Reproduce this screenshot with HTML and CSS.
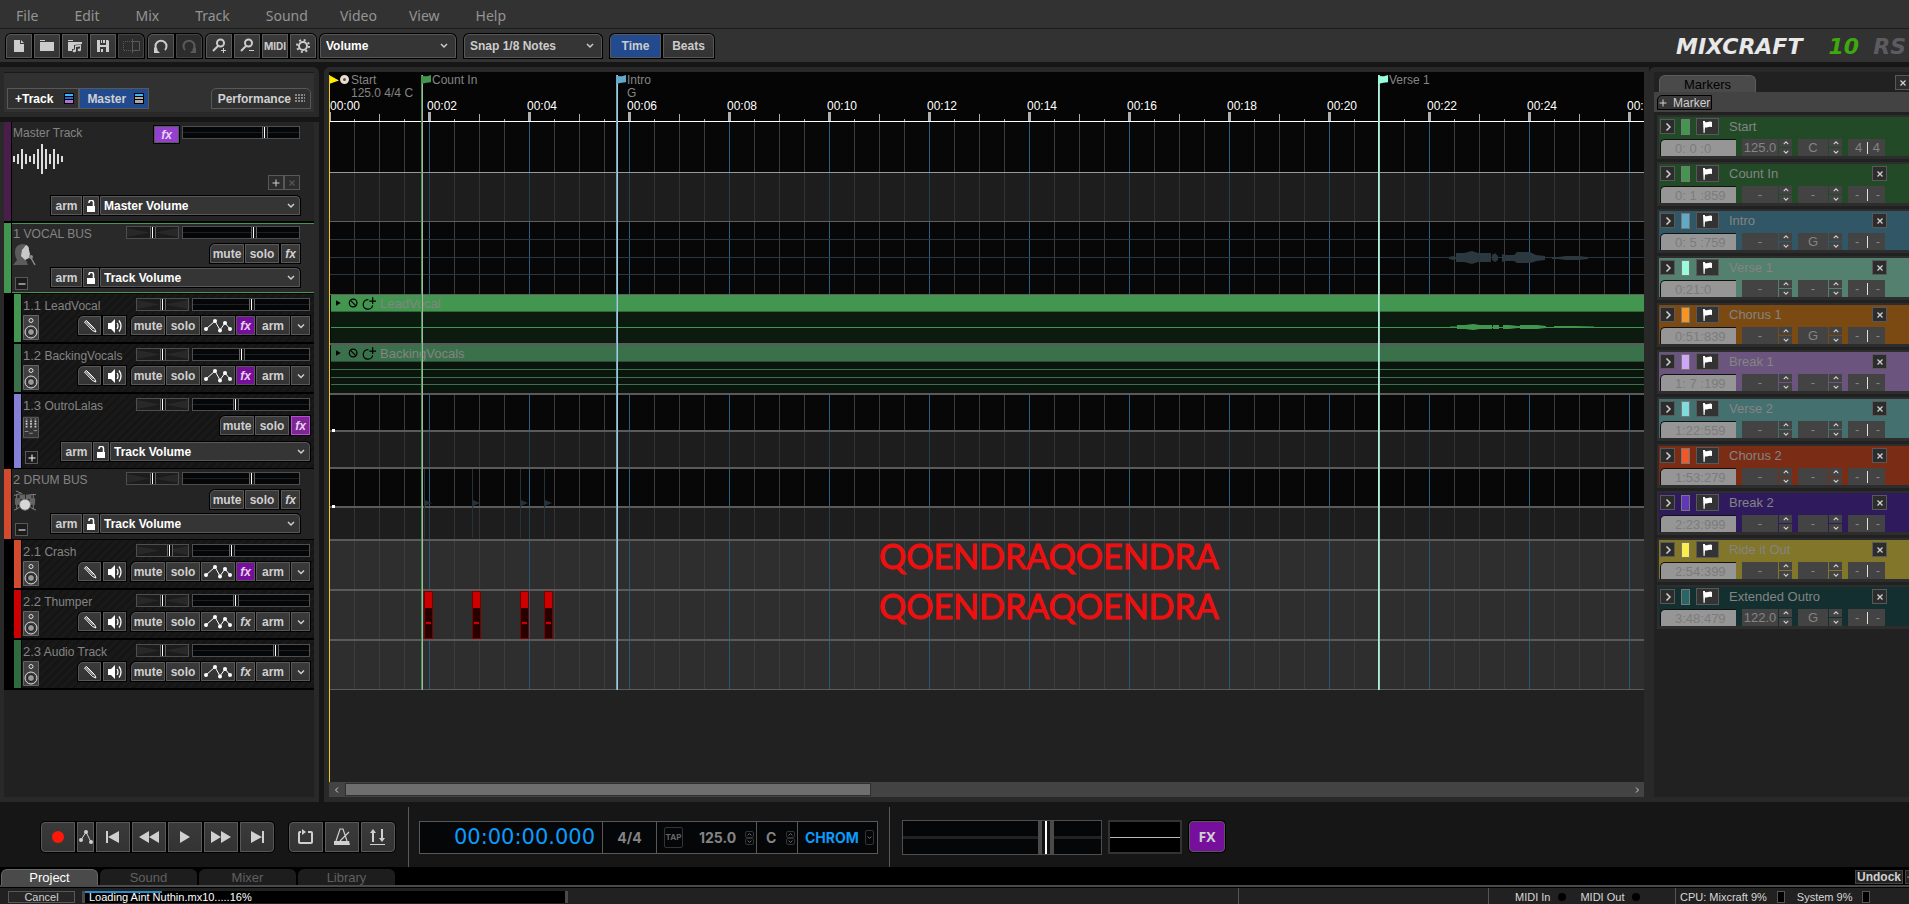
FILE: index.html
```html
<!DOCTYPE html>
<html lang="en">
<head>
    <meta charset="UTF-8">
    <meta name="viewport" content="width=device-width, initial-scale=1.0">
    <title>Mixcraft 10 RS</title>
    <link rel="stylesheet" href="styles.css">
</head>
<body>
    <svg class="sprite" aria-hidden="true">
        <symbol id="i-new" viewBox="0 0 16 16"><path d="M3 2h6v4h4v8H3z M10 2l3 3h-3z"/></symbol>
        <symbol id="i-open" viewBox="0 0 16 16"><path d="M1 2h5v1H1z M1 4h14v9H1z"/></symbol>
        <symbol id="i-music" viewBox="0 0 16 16"><path fill-rule="evenodd" d="M1 2h5v1H1z M1 4h14v2L7 7v4H5v2H1z M8 7.500l6-1V12a1.700 1.400 0 1 1-1-1.400V8.500L9 9v4a1.700 1.400 0 1 1-1-1.400z"/></symbol>
        <symbol id="i-save" viewBox="0 0 16 16"><path d="M3 2h2v5h6V2h2l1 1v11h-3V9H5v5H2V2z M6 2h1v3H6z M8 2h2v3H8z M6 11h2v3H6z"/></symbol>
        <symbol id="i-split" viewBox="0 0 20 16"><path fill="none" stroke="currentColor" d="M11.500 1v14M12 3.500h6.500v9H12"/><path fill="none" stroke="currentColor" stroke-dasharray="1 1" d="M11 3.500H2.500v9H11"/></symbol>
        <symbol id="i-undo" viewBox="0 0 16 16"><path fill="none" stroke="currentColor" stroke-width="2" d="M4 12A5.500 5.500 0 1 1 12 12"/><path d="M1 9v6h6z"/></symbol>
        <symbol id="i-redo" viewBox="0 0 16 16"><path fill="none" stroke="currentColor" stroke-width="2" d="M12 12A5.500 5.500 0 1 0 4 12"/><path d="M15 9v6H9z"/></symbol>
        <symbol id="i-zoomin" viewBox="0 0 16 16"><circle cx="9.500" cy="5" r="3.500" fill="none" stroke="currentColor" stroke-width="2"/><path fill="none" stroke="currentColor" stroke-width="2" d="M7 8l-5 5"/><path d="M12 10h1v2h2v1h-2v2h-1v-2h-2v-1h2z"/></symbol>
        <symbol id="i-zoomout" viewBox="0 0 16 16"><circle cx="9.500" cy="5" r="3.500" fill="none" stroke="currentColor" stroke-width="2"/><path fill="none" stroke="currentColor" stroke-width="2" d="M7 8l-5 5"/><path d="M10 12h5v1h-5z"/></symbol>
        <symbol id="i-gear" viewBox="0 0 16 16"><circle cx="8" cy="8" r="4" fill="none" stroke="currentColor" stroke-width="2"/><circle cx="8" cy="8" r="6" fill="none" stroke="currentColor" stroke-width="2" stroke-dasharray="2 2.710"/></symbol>
        <symbol id="i-grid" viewBox="0 0 10 10"><path fill="none" stroke="currentColor" stroke-width="2" stroke-dasharray="2 1" d="M0 1h10M0 4h10M0 7h10"/></symbol>
        <symbol id="i-lock" viewBox="0 0 10 12"><path d="M1 6h8v6H1z"/><path fill="none" stroke="currentColor" stroke-width="1.500" d="M3 3V2.500a2 2 0 0 1 4.500 0V6"/></symbol>
        <symbol id="i-pen" viewBox="0 0 14 14"><path fill="none" stroke="currentColor" d="M1.500 3l2-1.500 8 8 1.500 3.500-3.500-1.500z M3 2.500l7.500 7.500"/></symbol>
        <symbol id="i-sound" viewBox="0 0 16 14"><path d="M1 4h3l4-4v14l-4-4H1z"/><path fill="none" stroke="currentColor" stroke-width="1.300" d="M10 4q2 3 0 6M12 1.500q4 5.500 0 11"/></symbol>
        <symbol id="i-auto" viewBox="0 0 28 14"><path fill="none" stroke="currentColor" d="M2 10l9-8 5 9 5-7 5 6"/><circle cx="2" cy="10" r="2"/><circle cx="11" cy="2" r="2"/><circle cx="16" cy="11.500" r="2"/><circle cx="21" cy="4" r="2"/><circle cx="26" cy="10" r="2"/></symbol>
        <symbol id="i-down" viewBox="0 0 8 8"><path fill="none" stroke="currentColor" stroke-width="1.500" d="M1 2.500l3 3 3-3"/></symbol>
        <symbol id="i-up" viewBox="0 0 8 8"><path fill="none" stroke="currentColor" stroke-width="1.500" d="M1 5.500l3-3 3 3"/></symbol>
        <symbol id="i-right" viewBox="0 0 8 8"><path fill="none" stroke="currentColor" stroke-width="1.500" d="M2.500 0.500l3.500 3.500-3.500 3.500"/></symbol>
        <symbol id="i-left" viewBox="0 0 8 8"><path fill="none" stroke="currentColor" d="M5 1.500L2.500 4 5 6.500"/></symbol>
        <symbol id="i-x" viewBox="0 0 8 8"><path fill="none" stroke="currentColor" stroke-width="1.300" d="M1.500 1.500l5 5M6.500 1.500l-5 5"/></symbol>
        <symbol id="i-plus" viewBox="0 0 8 8"><path d="M3.500 0.500h1v3h3v1h-3v3h-1v-3h-3v-1h3z"/></symbol>
        <symbol id="i-minus" viewBox="0 0 8 8"><path d="M0.500 3.500h7v1h-7z"/></symbol>
        <symbol id="i-flag" viewBox="0 0 10 12"><path d="M0 0h2v1q2 .6 4-.2T9 1v5Q7 5.500 5.500 6T2 6.500L1.600 12H.6z"/></symbol>
        <symbol id="i-wave" viewBox="0 0 50 32"><path d="M0 13h2v6H0zM4 11h2v10H4zM8 6h2v20H8zM12 11h2v10h-2zM16 13h2v6h-2zM20 11h2v10h-2zM24 6h2v20h-2zM28 1h2v30h-2zM32 6h2v20h-2zM36 11h2v10h-2zM40 6h2v20h-2zM44 11h2v10h-2zM48 13h2v6h-2z"/></symbol>
        <symbol id="i-singer" viewBox="0 0 24 22"><path fill="#5c5c5c" d="M2 8Q2 1 9 0q6 0 7 4l-3 12 2 5H0l4-5Q2 13 2 8z"/><path fill="#c8c8c8" d="M9 6l4-5q3 1 3 5l1 4-1 4-4 2-4-4z"/><path fill="none" stroke="#8c8c8c" stroke-width="1.500" d="M18 14l4 7"/><circle cx="18" cy="13" r="2" fill="#8c8c8c"/></symbol>
        <symbol id="i-drums" viewBox="0 0 24 24"><path fill="none" stroke="#888" d="M0 6l7-2M17 5h7M3 5v16M21 5v16M0 22l6-3M24 22l-6-3M2 1l7 3"/><path fill="#646464" d="M1 9h6v7H1zM17 9h6v7h-6zM6 5h6v5H6zM13 5h6v5h-6z"/><circle cx="12" cy="16" r="6" fill="#d6d6d6" stroke="#777"/></symbol>
        <symbol id="i-speaker" viewBox="0 0 16 25"><path fill="#404040" stroke="#666" d="M.5.500h15v24H.5z"/><g fill="none" stroke="#ddd"><circle cx="8" cy="5.500" r="2"/><circle cx="8" cy="17" r="6"/><circle cx="8" cy="17" r="3.500" fill="#999" stroke="#111"/></g></symbol>
        <symbol id="i-faders" viewBox="0 0 18 24"><path fill="#353535" stroke="#666" d="M.5.500h17v23H.5z"/><path fill="none" stroke="#ccc" stroke-width="2" stroke-dasharray="2 1" d="M4 4v8M9 4v8M14 4v8"/><path fill="none" stroke="#999" d="M3 2.500h2M8 2.500h2M13 2.500h2M2 16.500h4M12 15.500h4M7 18.500h4"/></symbol>
        <symbol id="i-nodes" viewBox="0 0 14 14"><path fill="none" stroke="currentColor" d="M2 10l5-8 5 10"/><circle cx="2" cy="10" r="2"/><circle cx="7" cy="2" r="2"/><circle cx="12" cy="12" r="2"/></symbol>
        <symbol id="i-start" viewBox="0 0 22 14"><path d="M4 1h2v12H4zM17 1v12L6 7z"/></symbol>
        <symbol id="i-rew" viewBox="0 0 22 14"><path d="M11 1v12L1 7zM21 1v12L11 7z"/></symbol>
        <symbol id="i-play" viewBox="0 0 22 14"><path d="M6 1v12l10-6z"/></symbol>
        <symbol id="i-ff" viewBox="0 0 22 14"><path d="M1 1v12l10-6zM11 1v12l10-6z"/></symbol>
        <symbol id="i-end" viewBox="0 0 22 14"><path d="M16 1h2v12h-2zM5 1v12l11-6z"/></symbol>
        <symbol id="i-loop" viewBox="0 0 18 16"><path fill="none" stroke="currentColor" stroke-width="2" d="M4 3H3Q2 3 2 4v9q0 1 1 1h11q1 0 1-1V4q0-1-1-1h-3"/><path d="M5 0l4 3-4 3z"/></symbol>
        <symbol id="i-metro" viewBox="0 0 18 18"><path fill="none" stroke="currentColor" stroke-width="1.200" d="M3 13L7 1h3l4 12M7 13l9-9"/><path d="M1 13h15l1 4H1z"/></symbol>
        <symbol id="i-inout" viewBox="0 0 18 18"><path d="M4 1l3 4H5v9H3V5H1zM12 1h2v9h2l-3 4-3-4h2zM1 16h15v1H1z"/></symbol>
    </svg>

    <nav class="menubar">
        <a href="#">File</a><a href="#">Edit</a><a href="#">Mix</a><a href="#">Track</a><a href="#">Sound</a><a href="#" class="near">Video</a><a href="#" class="near">View</a><a href="#">Help</a>
    </nav>

    <header class="toolbar">
        <div class="tool-group">
            <button class="tool" aria-label="New"><svg><use href="#i-new"/></svg></button>
            <button class="tool" aria-label="Open"><svg><use href="#i-open"/></svg></button>
            <button class="tool" aria-label="Library"><svg><use href="#i-music"/></svg></button>
            <button class="tool" aria-label="Save"><svg><use href="#i-save"/></svg></button>
            <button class="tool off" aria-label="Split"><svg class="wide"><use href="#i-split"/></svg></button>
        </div>
        <div class="tool-group">
            <button class="tool" aria-label="Undo"><svg><use href="#i-undo"/></svg></button>
            <button class="tool off" aria-label="Redo"><svg><use href="#i-redo"/></svg></button>
        </div>
        <div class="tool-group">
            <button class="tool" aria-label="Zoom in"><svg><use href="#i-zoomin"/></svg></button>
            <button class="tool" aria-label="Zoom out"><svg><use href="#i-zoomout"/></svg></button>
            <button class="tool midi">MIDI</button>
            <button class="tool" aria-label="Settings"><svg><use href="#i-gear"/></svg></button>
        </div>
        <select class="drop automation" aria-label="Automation"><option>Volume</option></select>
        <select class="drop snap" aria-label="Snap"><option>Snap 1/8 Notes</option></select>
        <div class="tool-group">
            <button class="tool text active">Time</button>
            <button class="tool text">Beats</button>
        </div>
        <div class="logo"><span>MIXCRAFT</span><span class="ten">10</span><span class="rs">RS</span></div>
    </header>

    <main class="workspace">
        <section class="left">
            <div class="track-head">
                <div class="head-box">
                    <div class="joined">
                        <button class="head-btn bright">+Track <i class="bars color"></i></button>
                        <button class="head-btn active">Master <i class="bars"></i></button>
                    </div>
                    <button class="head-btn perf">Performance <svg><use href="#i-grid"/></svg></button>
                </div>
            </div>
            <div class="track-panel"><div class="tracks" id="tracks"></div></div>
        </section>

        <section class="arrange">
            <div class="timeline">
                <div class="ruler" id="ruler"></div>
                <div class="lane half" style="height:51px"></div>
                <div class="lane dim thin" style="height:49px"></div>
                <div class="lane thin bus-lane">
                    <svg class="bus-wave" viewBox="0 0 140 12"><path d="M0 5l4-1 3 1V1h8l8-2 6 2h13v9H29l-6 2-8-2H7V7l-3 1-4-1z M43 3l3-2 3 3v4l-3 2-3-2z M53 2l4 1h8l3-3h13l6 3 9 1v4l-8 1-7 2H68l-3-2h-8l-4 1z M103 5h6l8-1h12l10 1v2l-10 1h-12l-8-1h-6z"/></svg>
                </div>
                <div class="lane clip-lane">
                    <div class="clip lead">
                        <div class="clip-head"><svg class="clip-icons" viewBox="0 0 42 14"><path d="M0 4l5 3-5 3z"/><g fill="none" stroke="currentColor" stroke-width="1.300"><circle cx="18" cy="7" r="4"/><path d="M15 4l6 6M34 3.500a5 5 0 1 0 4.500 6M35 5h7M38.500 1v7"/></g></svg>LeadVocal</div>
                        <svg class="clip-wave" viewBox="0 0 144 4"><path d="M0 1.500h7V0h8l8-1 7 1h12v4H30l-7 1-8-1H7V2.500H0z M43 0h6v4h-6z M53 0h6l9 1h2V0h17l9 1v2l-9 1H70V3h-2l-9 1h-6z M104 1h20l20 .5v1l-20 .5h-20z"/></svg>
                    </div>
                </div>
                <div class="lane clip-lane">
                    <div class="clip backing">
                        <div class="clip-head"><svg class="clip-icons" viewBox="0 0 42 14"><path d="M0 4l5 3-5 3z"/><g fill="none" stroke="currentColor" stroke-width="1.300"><circle cx="18" cy="7" r="4"/><path d="M15 4l6 6M34 3.500a5 5 0 1 0 4.500 6M35 5h7M38.500 1v7"/></g></svg>BackingVocals</div>
                    </div>
                </div>
                <div class="lane node" style="height:37px"></div>
                <div class="lane dim" style="height:37px"></div>
                <div class="lane node" style="height:39px">
                    <i class="hit" style="left:95px"></i><i class="hit" style="left:143px"></i><i class="hit" style="left:191px"></i><i class="hit" style="left:215px"></i>
                </div>
                <div class="lane dim" style="height:33px"></div>
                <div class="lane audio"><b class="overlay">QOENDRAQOENDRA</b></div>
                <div class="lane audio">
                    <i class="sample" style="left:95px"></i><i class="sample" style="left:143px"></i><i class="sample" style="left:191px"></i><i class="sample" style="left:215px"></i>
                    <b class="overlay">QOENDRAQOENDRA</b>
                </div>
                <div class="lane audio last"></div>
                <div class="pin start" style="left:0"><i class="dot"></i><span>Start<br>125.0 4/4 C</span></div>
                <div class="pin green" style="left:92px"><span>Count In</span></div>
                <div class="pin blue" style="left:287px"><span>Intro<br>G</span></div>
                <div class="pin mint" style="left:1049px"><span>Verse 1</span></div>
                <div class="playhead"></div>
            </div>
            <div class="scroll">
                <button aria-label="Scroll left"><svg><use href="#i-left"/></svg></button>
                <div class="scroll-track"><div class="scroll-thumb"></div></div>
                <button aria-label="Scroll right"><svg class="flip"><use href="#i-left"/></svg></button>
            </div>
        </section>

        <aside class="side">
            <div class="side-tabs">
                <div class="side-tab">Markers</div>
                <button class="square" aria-label="Close"><svg><use href="#i-x"/></svg></button>
            </div>
            <div class="side-tools"><button class="add-marker"><svg><use href="#i-plus"/></svg>Marker</button></div>
            <div class="markers" id="markers"></div>
        </aside>
    </main>

    <section class="transport">
        <div class="controls">
            <div class="tgroup">
                <button class="tbtn" aria-label="Record"><i class="rec"></i></button>
                <button class="tbtn small" aria-label="Record automation"><svg><use href="#i-nodes"/></svg></button>
                <button class="tbtn" aria-label="Start"><svg><use href="#i-start"/></svg></button>
                <button class="tbtn" aria-label="Rewind"><svg><use href="#i-rew"/></svg></button>
                <button class="tbtn" aria-label="Play"><svg><use href="#i-play"/></svg></button>
                <button class="tbtn" aria-label="Fast forward"><svg><use href="#i-ff"/></svg></button>
                <button class="tbtn" aria-label="End"><svg><use href="#i-end"/></svg></button>
            </div>
            <div class="tgroup">
                <button class="tbtn big" aria-label="Loop"><svg><use href="#i-loop"/></svg></button>
                <button class="tbtn big" aria-label="Metronome"><svg><use href="#i-metro"/></svg></button>
                <button class="tbtn big" aria-label="Punch"><svg><use href="#i-inout"/></svg></button>
            </div>
        </div>
        <div class="display">
            <div class="lcd">
                <div class="clock">00:00:00.000</div>
                <div class="sig">4/4</div>
                <div class="tempo"><button class="tap">TAP</button><span>125.0</span><span class="ud"><button aria-label="Tempo up"><svg><use href="#i-up"/></svg></button><button aria-label="Tempo down"><svg><use href="#i-down"/></svg></button></span></div>
                <div class="key"><span>C</span><span class="ud"><button aria-label="Key up"><svg><use href="#i-up"/></svg></button><button aria-label="Key down"><svg><use href="#i-down"/></svg></button></span></div>
                <div class="mode">CHROM<span class="ud"><button class="tall" aria-label="Mode"><svg><use href="#i-down"/></svg></button></span></div>
            </div>
        </div>
        <div class="output">
            <input class="range main-vol" type="range" value="74" aria-label="Main volume">
            <div class="scope"></div>
            <button class="main-fx">FX</button>
        </div>
    </section>

    <nav class="tabs">
        <button class="tab active">Project</button>
        <button class="tab">Sound</button>
        <button class="tab">Mixer</button>
        <button class="tab">Library</button>
        <div class="undock"><button>Undock</button><button aria-label="Collapse"><svg><use href="#i-minus"/></svg></button></div>
    </nav>

    <footer class="status">
        <button class="cancel">Cancel</button>
        <div class="progress"><i style="width:16%"></i>Loading Aint Nuthin.mx10.....16%</div>
        <div class="cell grow"></div>
        <div class="cell grow2"></div>
        <div class="cell midi-cell">MIDI In <i class="led"></i> MIDI Out <i class="led"></i></div>
        <div class="cell cpu">CPU: Mixcraft 9% <i class="meter"></i> System 9% <i class="meter"></i></div>
    </footer>

    <script src="script.js"></script>
</body>
</html>
```

FILE: styles.css
```css
* {
    box-sizing: border-box;
}
body {
    margin: 0;
    min-height: 100vh;
    display: flex;
    flex-direction: column;
    background-color: #161616;
    color: #848484;
    font-family: "Liberation Sans", Arial, sans-serif;
    font-size: 12px;
    overflow: hidden;
}
button, select, input {
    font: inherit;
    color: #d0d0d0;
    margin: 0;
    padding: 0;
    border-radius: 0;
}
button {
    display: flex;
    align-items: center;
    justify-content: center;
    background: linear-gradient(#3a3a3a, #333333);
    border: 1px solid #585858;
    white-space: nowrap;
}
svg {
    display: block;
    width: 16px;
    height: 16px;
    fill: currentColor;
    flex: none;
}
.sprite {
    position: absolute;
    width: 0;
    height: 0;
}

/* menu and toolbar */
.menubar {
    display: flex;
    height: 29px;
    background-color: #323232;
    border-bottom: 1px solid #1c1c1c;
}
.menubar a {
    color: #949494;
    text-decoration: none;
    font-family: "Noto Sans", sans-serif;
    font-size: 14px;
    line-height: 31px;
    padding: 0 18px;
}
.menubar a:first-child {
    padding-left: 16px;
}
.menubar a.near {
    padding-left: 14px;
}
.toolbar {
    display: flex;
    gap: 4px;
    height: 33px;
    padding: 5px 3px 0 6px;
    background-color: #323232;
}
.tool-group {
    display: flex;
    gap: 2px;
}
.tool, .drop {
    width: 26px;
    height: 24px;
    box-shadow: 0 0 0 1px #000;
    font-weight: bold;
    font-size: 12px;
    color: #cccccc;
}
.tool-group .tool:first-child {
    border-top-left-radius: 5px;
}
.tool-group .tool:last-child {
    border-top-right-radius: 5px;
}
.tool .wide {
    width: 20px;
}
.tool.off {
    color: #5a5a5a;
    background: #2c2c2c;
    border-color: #444444;
}
.tool.midi {
    font-family: Inter, sans-serif;
    font-size: 10px;
}
.tool.text {
    width: 51px;
}
.tool.active, .head-btn.active {
    background: #214a8f;
}
select {
    appearance: none;
    border: 1px solid #585858;
    background: #353535 url("data:image/svg+xml,%3Csvg xmlns='http://www.w3.org/2000/svg' width='8' height='8'%3E%3Cpath fill='none' stroke='%23ccc' stroke-width='1.500' d='M1 2l3 3 3-3'/%3E%3C/svg%3E") no-repeat right 7px center;
    padding-left: 5px;
}
.drop {
    width: 136px;
    border-radius: 5px 5px 0 0;
    color: #ffffff;
}
.drop.snap {
    width: 138px;
    margin: 0 4px;
    color: #cccccc;
}
.logo {
    display: flex;
    justify-content: space-between;
    width: 230px;
    margin-left: auto;
    font-family: "DejaVu Sans", sans-serif;
    font-weight: bold;
    font-style: italic;
    font-size: 22px;
    line-height: 26px;
    color: #e8e8e8;
}
.logo .ten {
    margin-left: 12px;
    color: #3fa80c;
}
.logo .rs {
    color: #5c5c60;
}

/* workspace */
.workspace {
    flex: 1;
    display: flex;
    gap: 5px;
    padding-top: 5px;
    min-height: 0;
}
.left {
    width: 319px;
    display: flex;
    flex-direction: column;
    gap: 5px;
}
.track-head {
    background-color: #292929;
    border-top-right-radius: 6px;
    padding: 5px 5px 5px 4px;
}
.head-box {
    display: flex;
    justify-content: space-between;
    height: 40px;
    padding: 15px 3px 0;
    border-top: 1px solid #1a1a1a;
    background-color: #313131;
}
.joined {
    display: flex;
}
.head-btn {
    height: 21px;
    gap: 11px;
    padding: 0 4px 0 7px;
    font-weight: bold;
    background: #303030;
}
.head-btn.bright {
    color: #ffffff;
}
.head-btn.active {
    gap: 8px;
}
.head-btn.perf {
    gap: 4px;
    padding: 0 5px 0 6px;
    border-radius: 5px 5px 0 0;
}
.head-btn svg {
    width: 10px;
    height: 10px;
    color: #888888;
}
.bars {
    width: 10px;
    height: 11px;
    border: 1px solid #000;
    background: linear-gradient(#38b6ff 2px, #000 2px, #000 3px, #aaaaaa 3px, #aaaaaa 5px, #000 5px, #000 6px, #aaaaaa 6px);
}
.bars.color {
    background: linear-gradient(#38b6ff 2px, #000 2px, #000 3px, #176fd8 3px, #176fd8 5px, #000 5px, #000 6px, #b36fd8 6px);
}
.track-panel {
    flex: 1;
    padding: 0 5px 5px 4px;
    background: #292929;
}
.tracks {
    height: 100%;
    background-color: #212121;
}

/* track rows */
.track {
    display: flex;
    height: 50px;
    background-color: #000;
    border-bottom: 2px solid #000;
}
.track.sub {
    padding-left: 10px;
}
.track.master {
    height: 101px;
}
.track.bus {
    height: 71px;
    border-bottom-width: 1px;
}
.track.folder {
    height: 75px;
    border-bottom-width: 1px;
}
.strip {
    width: 7px;
    margin-right: 1px;
    background-color: var(--color);
}
.track-body {
    flex: 1;
    padding: 3px 14px 0 1px;
    background-color: #242424;
}
.master .track-body {
    padding-top: 4px;
}
.selected .track-body {
    border-top: 1px solid var(--color);
    border-bottom: 1px solid var(--color);
    padding-top: 2px;
    background-color: #292929;
}
.sub .track-body {
    padding-right: 4px;
    padding-top: 4px;
    background: repeating-linear-gradient(135deg, #191919, #191919 3px, #151515 3px, #151515 6px);
}
.row {
    display: flex;
    gap: 1px;
    height: 24px;
}
.row:first-child {
    height: 18px;
    gap: 3px;
}
.master .row:nth-child(2) {
    height: 32px;
    margin-top: -1px;
}
.master .row:nth-child(3) {
    height: 21px;
    gap: 0;
}
.folder .row:nth-child(3) {
    padding-top: 2px;
}
.name {
    flex: 1;
    line-height: 15px;
    white-space: nowrap;
}
.name b {
    font-weight: normal;
    font-size: 13px;
}
.row .art {
    margin-right: auto;
}
.art.wave {
    width: 50px;
    height: 32px;
    color: #dddddd;
}
.art.singer, .art.drums {
    width: 24px;
    height: 22px;
}
.art.speaker, .art.faders {
    width: 16px;
    height: 25px;
    margin-top: -1px;
}
.tb {
    width: 34px;
    height: 19px;
    box-shadow: 0 0 0 1px #000;
    font-weight: bold;
    font-size: 12px;
}
.tb.round {
    border-top-left-radius: 5px;
}
.tb.icon {
    width: 23px;
    margin-right: 1px;
    color: #ffffff;
}
.tb.icon:nth-of-type(2) {
    margin-right: 4px;
}
.tb.icon svg, .tb.icon.snd svg {
    width: 16px;
    height: 14px;
}
.tb svg.auto {
    width: 28px;
    height: 14px;
    color: #ffffff;
}
.tb.fx {
    width: 19px;
    font-style: italic;
}
.tb.fx.on {
    background: #760f9b;
    color: #e8d0f0;
}
.bus .tb.fx, .folder .tb.fx {
    margin-left: 1px;
}
.folder .tb.fx.on {
    background: #7d2795;
    border-color: #b94fd4;
}
.master .tb.fx {
    width: 25px;
    height: 17px;
    background: #9340cf;
}
.tb.more {
    width: 19px;
}
.tb.more svg {
    width: 8px;
    height: 8px;
    color: #cccccc;
}
.tb.arm {
    width: 31px;
}
.tb.lock {
    width: 16px;
    color: #ffffff;
}
.tb.lock svg {
    width: 10px;
    height: 12px;
}
.sub .row:nth-child(2) .tb.arm {
    width: 34px;
}
.param {
    width: 200px;
    height: 19px;
    padding-left: 3px;
    border-top-right-radius: 4px;
    box-shadow: 0 0 0 1px #000;
    background-position: right 4px center;
    color: #ffffff;
    font-weight: bold;
}
.square {
    width: 16px;
    height: 15px;
    background: #2c2c2c;
}
.square svg {
    width: 8px;
    height: 8px;
}
.square.off {
    color: #555555;
}
.expand {
    width: 13px;
    height: 13px;
    margin: 9px auto 0 2px;
    background: #1c1c1c;
    color: #ffffff;
}
.expand svg {
    width: 8px;
    height: 8px;
}
.push {
    margin-left: auto;
}

/* sliders */
.range {
    appearance: none;
    width: 118px;
    height: 13px;
    border: 1px solid #4e4e4e;
    background: linear-gradient(#050608 5px, #1e2024 5px, #1e2024 6px, #050608 6px);
}
.range::-webkit-slider-thumb {
    appearance: none;
    width: 6px;
    height: 11px;
    background: linear-gradient(90deg, #666666 1px, #111111 1px, #111111 2px, #ffffff 2px, #ffffff 3px, #111111 3px, #111111 5px, #666666 5px);
}
.range.pan {
    width: 53px;
    background: #1c1c1c url("data:image/svg+xml,%3Csvg xmlns='http://www.w3.org/2000/svg' width='51' height='11'%3E%3Cpath fill='%23282828' d='M0 1l23 4.500L0 10zM51 1L28 5.500 51 10z'/%3E%3C/svg%3E") no-repeat;
}
.main-vol {
    width: 200px;
    height: 35px;
    background: linear-gradient(#050608 15px, #222222 15px, #222222 18px, #050608 18px);
}
.main-vol::-webkit-slider-thumb {
    width: 16px;
    height: 33px;
    background: linear-gradient(90deg, #4a4a4a 4px, #111111 4px, #111111 7px, #ffffff 7px, #ffffff 9px, #111111 9px, #111111 12px, #4a4a4a 12px);
}

/* arrange */
.arrange {
    flex: 1;
    min-width: 0;
    display: flex;
    flex-direction: column;
    padding: 5px;
    background-color: #292929;
    border-top-left-radius: 6px;
}
.timeline {
    position: relative;
    flex: 1;
    overflow: hidden;
    background-color: #212121;
}
.ruler {
    display: flex;
    height: 50px;
    padding-top: 27px;
    overflow: hidden;
    color: #ffffff;
    background:
        linear-gradient(#ffffff, #ffffff) 0 49px / 100% 1px no-repeat,
        linear-gradient(90deg, #b0b0b0 2px, transparent 2px, transparent 99px, #b0b0b0 99px) 0 40px / 100px 9px repeat-x,
        linear-gradient(90deg, #b0b0b0 1px, transparent 1px) 50px 42px / 100px 7px repeat-x,
        linear-gradient(90deg, #b0b0b0 1px, transparent 1px) 25px 47px / 50px 2px repeat-x,
        #050505;
}
.ruler span {
    flex: none;
    width: 100px;
    line-height: 14px;
    text-indent: -2px;
}
.ruler span:first-child {
    text-indent: 1px;
}
.lane {
    --bg: #070707;
    --minor: #3c3c3c;
    --major: #285f82;
    position: relative;
    border-bottom: 2px solid #5a5a5a;
    background:
        linear-gradient(90deg, var(--major) 1px, transparent 1px) 0 0 / 100px 100%,
        linear-gradient(90deg, var(--minor) 1px, transparent 1px) 0 0 / 25px 100%,
        var(--bg);
}
.lane.half {
    border-bottom: 1px solid #999999;
}
.lane.thin {
    border-bottom: 1px solid #5f5f5f;
}
.lane.dim {
    --bg: #1d1d1d;
    --minor: #333333;
    --major: #22404e;
}
.lane.audio {
    height: 50px;
    --bg: #2e2e2e;
    --minor: #3d3d3d;
    --major: #275a77;
}
.lane.audio.last {
    height: 49px;
    border-bottom-width: 1px;
}
.bus-lane {
    height: 73px;
}
.bus-lane::before {
    content: "";
    position: absolute;
    inset: 0;
    background: linear-gradient(transparent 17px, #2a353d 17px, #2a353d 18px, transparent 18px, transparent 35px, #2a353d 35px, #2a353d 36px, transparent 36px, transparent 52px, #2a353d 52px, #2a353d 53px, transparent 53px);
}
.bus-wave {
    position: absolute;
    left: 1120px;
    top: 30px;
    width: 140px;
    height: 12px;
    overflow: visible;
    color: #2b3840;
}
.clip-lane {
    height: 50px;
}
.clip {
    height: 48px;
    margin-left: 2px;
    position: relative;
}
.clip-head {
    display: flex;
    align-items: center;
    gap: 4px;
    height: 17px;
    padding-left: 5px;
    font-size: 13px;
    border-bottom: 1px solid rgba(0, 0, 0, 0.3);
}
.clip-icons {
    width: 40px;
    height: 14px;
    color: #000;
}
.lead .clip-head {
    background-color: #42964f;
}
.lead {
    background: linear-gradient(#0d1a10 32px, #42964f 32px, #42964f 33px, #0d1a10 33px);
}
.backing {
    background: linear-gradient(#0b150e 24px, #3a714a 24px, #3a714a 25px, #0b150e 25px, #0b150e 32px, #3a714a 32px, #3a714a 33px, #0b150e 33px, #0b150e 39px, #3a714a 39px, #3a714a 40px, #0b150e 40px);
}
.backing .clip-head {
    background-color: #3a714a;
}
.clip-wave {
    position: absolute;
    left: 1119px;
    top: 30px;
    width: 144px;
    height: 4px;
    overflow: visible;
    color: #42964f;
}
.lane.node::before {
    content: "";
    position: absolute;
    left: 3px;
    bottom: -2px;
    width: 3px;
    height: 3px;
    background-color: #ffffff;
}
.hit {
    position: absolute;
    top: 0;
    width: 8px;
    height: 69px;
    z-index: 1;
    border-left: 1px solid #26323a;
}
.hit::after {
    content: "";
    position: absolute;
    left: 0;
    top: 31px;
    border-left: 7px solid #26323a;
    border-top: 3px solid transparent;
    border-bottom: 3px solid transparent;
}
.sample {
    position: absolute;
    top: 0;
    width: 9px;
    height: 48px;
    border: 1px solid #7a0000;
    background:
        linear-gradient(#cc0000, #cc0000) 1px 30px / 5px 2px no-repeat,
        linear-gradient(#cc0000 16px, #280000 16px);
}
.overlay {
    position: absolute;
    left: 550px;
    top: -9px;
    z-index: 2;
    font-family: Lato, sans-serif;
    font-weight: normal;
    font-size: 34px;
    line-height: 48px;
    color: #ee1010;
    -webkit-text-stroke: 1px #ee1010;
}
.pin {
    position: absolute;
    top: 3px;
    height: 615px;
    width: 2px;
    background: linear-gradient(90deg, var(--flag) 1px, var(--edge) 1px);
    white-space: nowrap;
}
.pin::before {
    content: "";
    position: absolute;
    left: 0;
    top: 0;
    width: 10px;
    height: 9px;
    background-color: var(--flag);
    clip-path: polygon(0 10%, 60% 15%, 100% 0, 100% 80%, 55% 85%, 0 100%);
}
.pin span {
    position: absolute;
    left: 11px;
    top: -1px;
    line-height: 13px;
}
.pin.green {
    --flag: #42964f;
    --edge: #a8b4a8;
}
.pin.blue {
    --flag: #62a9c8;
    --edge: #b4c4cc;
}
.pin.mint {
    --flag: #98fbdc;
    --edge: #b0c8c0;
}
.pin.start {
    background: none;
}
.pin.start::before {
    background-color: #ffee00;
    clip-path: polygon(0 0, 100% 60%, 0 100%);
}
.pin.start span {
    left: 22px;
}
.dot {
    position: absolute;
    left: 11px;
    top: 0;
    width: 9px;
    height: 9px;
    border-radius: 50%;
    border: 3px solid #e8dccb;
    background-color: #555555;
}
.playhead {
    position: absolute;
    left: 0;
    top: 3px;
    bottom: 0;
    width: 1px;
    background-color: #f0c81e;
}
.scroll {
    display: flex;
    height: 15px;
    background-color: #434343;
}
.scroll button {
    width: 15px;
    border: none;
    background: none;
}
.scroll svg {
    width: 8px;
    height: 8px;
}
.scroll .flip {
    transform: rotate(180deg);
}
.scroll-track {
    flex: 1;
    padding: 1px;
}
.scroll-thumb {
    width: 41%;
    height: 13px;
    border: 1px solid #2f2f2f;
    background-color: #6e6e6e;
}

/* markers panel */
.side {
    width: 260px;
    margin-left: -5px;
    padding: 5px 0 5px 5px;
    display: flex;
    flex-direction: column;
    background-color: #292929;
    border-top-left-radius: 6px;
    overflow: hidden;
}
.side-tabs {
    display: flex;
    justify-content: space-between;
    height: 20px;
    margin-right: -2px;
    padding: 3px 0 0 5px;
    background-color: #212121;
}
.side-tab {
    width: 97px;
    border: 1px solid #5c5c5c;
    border-bottom: none;
    border-radius: 6px 6px 0 0;
    background-color: #4a4a4a;
    color: #000;
    font-size: 13px;
    line-height: 17px;
    text-align: center;
}
.side-tools {
    height: 20px;
    padding: 3px;
    background-color: #434343;
}
.add-marker {
    height: 15px;
    gap: 6px;
    padding: 0 1px;
    border-color: #000;
    border-top-left-radius: 5px;
}
.add-marker svg {
    width: 8px;
    height: 8px;
}
.markers {
    flex: 1;
    display: flex;
    flex-direction: column;
    gap: 3px;
    padding: 3px 0 0 3px;
    background-color: #212121;
}
.marker {
    height: 44px;
    padding: 1px;
    border: 2px solid #2d2d2d;
    border-right: none;
    border-bottom-width: 3px;
    background-color: var(--bg);
}
.marker-top {
    display: flex;
    align-items: center;
    height: 17px;
    padding-right: 21px;
}
.marker-top .square {
    width: 15px;
}
.swatch {
    width: 9px;
    height: 16px;
    margin: 0 6px;
    border: 1px solid #777777;
    background-color: var(--color);
}
.flag-btn {
    width: 23px;
    height: 17px;
    color: #ffffff;
    background: #333333;
}
.flag-btn svg {
    width: 10px;
    height: 12px;
}
.marker-name {
    flex: 1;
    padding-left: 10px;
    font-size: 13px;
}
.marker-fields {
    display: flex;
    gap: 6px;
    margin-top: 4px;
    height: 17px;
}
.marker input {
    border: none;
    width: 36px;
    height: 17px;
    background-color: #434343;
    color: #848484;
    font-size: 13px;
    text-align: center;
}
.marker .time {
    width: 76px;
    padding-left: 14px;
    border-top: 1px solid #111111;
    border-left: 1px solid #111111;
    border-top-left-radius: 5px;
    background-color: #969696;
    color: #7c7c7c;
    text-align: left;
}
.marker .spin {
    display: flex;
    gap: 1px;
}
.marker .key-in {
    width: 30px;
}
.spin .arrows {
    display: flex;
    flex-direction: column;
    gap: 1px;
}
.arrows button {
    width: 13px;
    height: 8px;
    border: none;
    background: #434343;
}
.arrows svg {
    width: 6px;
    height: 6px;
}
.meter-sig {
    display: flex;
    align-items: center;
    justify-content: space-between;
    width: 37px;
    padding: 0 5px 0 7px;
    font-size: 13px;
    background-color: #434343;
}
.meter-sig i {
    width: 1px;
    height: 12px;
    background-color: #e0e0e0;
}

/* transport */
.transport {
    display: flex;
    height: 65px;
    padding-top: 5px;
}
.controls {
    width: 409px;
    display: flex;
    gap: 15px;
    padding: 15px 0 0 41px;
    border-right: 1px solid #585858;
}
.tgroup {
    display: flex;
    gap: 2px;
}
.tbtn {
    width: 34px;
    height: 30px;
    box-shadow: 0 0 0 1px #000;
}
.tbtn.small {
    width: 17px;
}
.tbtn svg {
    width: 22px;
    height: 14px;
}
.tbtn.small svg {
    width: 14px;
}
.tbtn.big svg {
    width: 18px;
    height: 18px;
}
.tgroup .tbtn:first-child {
    border-radius: 4px 0 0 4px;
}
.tgroup .tbtn:last-child {
    border-radius: 0 4px 4px 0;
}
.rec {
    width: 12px;
    height: 12px;
    border-radius: 50%;
    background-color: #ff1808;
}
.display {
    padding: 14px 11px 0 10px;
    border-right: 1px solid #585858;
}
.lcd {
    display: flex;
    height: 33px;
    border: 1px solid #585858;
    background-color: #050608;
    font-family: Inter, sans-serif;
    font-weight: bold;
    font-size: 14px;
    line-height: 31px;
}
.lcd > div {
    display: flex;
    align-items: center;
    border-left: 1px solid #585858;
}
.lcd .clock {
    width: 182px;
    padding-right: 7px;
    justify-content: flex-end;
    border-left: none;
    color: #0c9bfa;
    font-family: "DejaVu Sans", sans-serif;
    font-weight: normal;
    font-size: 21px;
}
.lcd .sig {
    width: 54px;
    justify-content: center;
}
.lcd .tempo {
    width: 100px;
    justify-content: space-between;
    padding: 0 2px 0 7px;
}
.tap {
    width: 19px;
    height: 21px;
    margin-right: 7px;
    border-color: #333333;
    border-radius: 2px;
    background: none;
    color: #666666;
    font-size: 8px;
}
.lcd .key {
    width: 41px;
    justify-content: space-between;
    padding: 0 2px 0 9px;
}
.lcd .mode {
    width: 80px;
    justify-content: space-between;
    padding: 0 3px 0 7px;
    color: #0c9bfa;
}
.ud button {
    width: 9px;
    height: 7px;
    border-color: #333333;
    border-radius: 2px;
    background: none;
    color: #777777;
}
.ud .tall {
    height: 15px;
}
.ud svg {
    width: 5px;
    height: 5px;
}
.output {
    display: flex;
    gap: 6px;
    padding: 13px 0 0 12px;
}
.scope {
    width: 74px;
    height: 34px;
    border: 2px solid #333333;
    background: linear-gradient(#000 15px, #bbbbbb 15px, #bbbbbb 16px, #000 16px);
}
.main-fx {
    width: 36px;
    height: 31px;
    margin: 1px 0 0 1px;
    border-radius: 4px;
    background: #770f9d;
    font-family: "Open Sans", sans-serif;
    font-weight: bold;
    font-size: 14px;
    box-shadow: 0 0 0 1px #000;
}

/* bottom tabs and status */
.tabs {
    display: flex;
    gap: 2px;
    height: 20px;
    padding: 2px 0 0 1px;
    border-bottom: 2px solid #4a4a4a;
    background-color: #000;
}
.tab {
    width: 97px;
    border: none;
    border-radius: 6px 6px 0 0;
    background: #1d1d1d;
    color: #606060;
    font-size: 13px;
}
.tab.active {
    background: #4a4a4a;
    border: 1px solid #666666;
    border-bottom: none;
    color: #ffffff;
}
.undock {
    display: flex;
    align-items: center;
    margin-left: auto;
    margin-right: -6px;
    gap: 2px;
}
.undock button {
    height: 14px;
    padding: 0 1px;
    background: #222222;
    font-weight: bold;
    border: 1px solid #444444;
}
.undock svg {
    width: 6px;
    height: 6px;
}
.status {
    display: flex;
    height: 17px;
    background-color: #212121;
    border-top: 1px solid #000;
    font-size: 11px;
    color: #d8d8d8;
}
.cancel {
    width: 67px;
    height: 12px;
    margin: 3px 7px 0 8px;
    background: #262626;
    font-size: 11px;
    line-height: 10px;
}
.progress {
    position: relative;
    width: 486px;
    margin: 3px 0 1px;
    padding-left: 4px;
    border-left: 3px solid #4a4a4a;
    border-right: 3px solid #4a4a4a;
    background-color: #000;
    color: #ffffff;
    line-height: 13px;
}
.progress i {
    position: absolute;
    left: 0;
    top: 0;
    height: 2px;
    background-color: #2a8ccc;
}
.cell {
    display: flex;
    align-items: center;
    gap: 8px;
    padding-top: 2px;
    border-right: 1px solid #555555;
}
.cell.grow {
    flex: 671;
}
.cell.grow2 {
    flex: 250;
}
.midi-cell {
    width: 187px;
    padding-left: 26px;
}
.cpu {
    width: 233px;
    padding-left: 4px;
    gap: 10px;
    border-right: none;
}
.led {
    width: 8px;
    height: 8px;
    margin-right: 6px;
    border-radius: 50%;
    background-color: #000;
}
.meter {
    width: 8px;
    height: 12px;
    margin-right: 2px;
    border: 1px solid #555555;
    background-color: #000;
}
```

FILE: script.js
```js
const tracks = [
    { type: 'master', name: 'Master Track', color: '#4b1d4b', vol: 72, art: 'wave', param: 'Master Volume' },
    { type: 'bus selected', num: '1', name: 'VOCAL BUS', color: '#42964f', pan: 50, vol: 62, art: 'singer', sign: 'minus', param: 'Track Volume' },
    { type: 'sub', num: '1.1', name: 'LeadVocal', color: '#42964f', pan: 50, vol: 51, art: 'speaker', fx: true },
    { type: 'sub', num: '1.2', name: 'BackingVocals', color: '#3a714a', pan: 50, vol: 42, art: 'speaker', fx: true },
    { type: 'sub folder', num: '1.3', name: 'OutroLalas', color: '#8480d8', pan: 50, vol: 36, art: 'faders', fx: true, sign: 'plus', param: 'Track Volume' },
    { type: 'bus', num: '2', name: 'DRUM BUS', color: '#d24b2e', pan: 50, vol: 60, art: 'drums', sign: 'minus', param: 'Track Volume' },
    { type: 'sub', num: '2.1', name: 'Crash', color: '#d24b2e', pan: 67, vol: 33, art: 'speaker', fx: true },
    { type: 'sub', num: '2.2', name: 'Thumper', color: '#cc0000', pan: 50, vol: 36, art: 'speaker' },
    { type: 'sub', num: '2.3', name: 'Audio Track', color: '#2f6b3e', pan: 50, vol: 73, art: 'speaker' }
];

const markers = [
    { name: 'Start', time: '0: 0 :0', bg: '#224a26', color: '#439650', tempo: '125.0', key: 'C', sig: '4' },
    { name: 'Count In', time: '0: 1 :859', bg: '#224a26', color: '#439650' },
    { name: 'Intro', time: '0: 5 :759', bg: '#315666', color: '#60aac8', key: 'G' },
    { name: 'Verse 1', time: '0:21:0', bg: '#53806f', color: '#98fbdc' },
    { name: 'Chorus 1', time: '0:51:839', bg: '#7a4a12', color: '#f89522', key: 'G' },
    { name: 'Break 1', time: '1: 7 :199', bg: '#6b557f', color: '#cfa6f8' },
    { name: 'Verse 2', time: '1:22:559', bg: '#44706f', color: '#80dbdc' },
    { name: 'Chorus 2', time: '1:53:279', bg: '#7b2c15', color: '#f05828' },
    { name: 'Break 2', time: '2:23:999', bg: '#301a5e', color: '#6236b8' },
    { name: 'Ride it Out', time: '2:54:399', bg: '#81762a', color: '#fced4c' },
    { name: 'Extended Outro', time: '3:48:479', bg: '#132f2f', color: '#276566', tempo: '122.0', key: 'G' }
];

function icon(name, cls = '') {
    return `<svg class="${cls}"><use href="#i-${name}"/></svg>`;
}

function mixRow(t) {
    const fx = `<button class="tb fx ${t.fx ? 'on' : ''}">fx</button>`;
    const art = icon(t.art, 'art ' + t.art);
    if (t.type === 'master') {
        return `<div class="row">${art}</div>
            <div class="row"><button class="square push" aria-label="Add">${icon('plus')}</button><button class="square off" aria-label="Remove">${icon('x')}</button></div>`;
    }
    if (t.param) {
        return `<div class="row">${art}<button class="tb round">mute</button><button class="tb">solo</button>${fx}</div>`;
    }
    return `<div class="row">${art}
        <button class="tb icon round" aria-label="Edit">${icon('pen')}</button>
        <button class="tb icon snd" aria-label="Monitor">${icon('sound')}</button>
        <button class="tb round">mute</button><button class="tb">solo</button>
        <button class="tb" aria-label="Automation">${icon('auto', 'auto')}</button>${fx}
        <button class="tb arm">arm</button><button class="tb more" aria-label="More">${icon('down')}</button></div>`;
}

function paramRow(t) {
    if (!t.param) return '';
    const sign = t.sign ? `<button class="expand" aria-label="Expand">${icon(t.sign)}</button>` : '<span class="push"></span>';
    return `<div class="row">${sign}<button class="tb arm">arm</button><button class="tb lock" aria-label="Lock">${icon('lock')}</button>
        <select class="param" aria-label="${t.name} parameter"><option>${t.param}</option></select></div>`;
}

document.getElementById('tracks').innerHTML = tracks.map(t => `
    <div class="track ${t.type}" style="--color:${t.color}">
        <div class="strip"></div>
        <div class="track-body">
            <div class="row">
                <div class="name">${t.num ? `<b>${t.num}</b> ` : ''}${t.name}</div>
                ${t.pan ? `<input class="range pan" type="range" value="${t.pan}" aria-label="${t.name} pan">` : '<button class="tb fx on">fx</button>'}
                <input class="range" type="range" value="${t.vol}" aria-label="${t.name} volume">
            </div>
            ${mixRow(t)}${paramRow(t)}
        </div>
    </div>`).join('');

const arrows = `<div class="arrows"><button aria-label="Up">${icon('up')}</button><button aria-label="Down">${icon('down')}</button></div>`;

document.getElementById('markers').innerHTML = markers.map((m, i) => `
    <div class="marker" style="--bg:${m.bg};--color:${m.color}">
        <div class="marker-top">
            <button class="square" aria-label="Go to">${icon('right')}</button>
            <i class="swatch"></i>
            <button class="flag-btn" aria-label="Flag">${icon('flag')}</button>
            <span class="marker-name">${m.name}</span>
            ${i ? `<button class="square" aria-label="Delete">${icon('x')}</button>` : ''}
        </div>
        <div class="marker-fields">
            <input class="time" value="${m.time}" aria-label="${m.name} time">
            <div class="spin"><input value="${m.tempo || '-'}" aria-label="${m.name} tempo">${arrows}</div>
            <div class="spin"><input class="key-in" value="${m.key || '-'}" aria-label="${m.name} key">${arrows}</div>
            <div class="meter-sig">${m.sig || '-'}<i></i>${m.sig || '-'}</div>
        </div>
    </div>`).join('');

let labels = '';
for (let s = 0; s <= 26; s += 2) {
    labels += `<span>00:${String(s).padStart(2, '0')}</span>`;
}
document.getElementById('ruler').innerHTML = labels;
```
